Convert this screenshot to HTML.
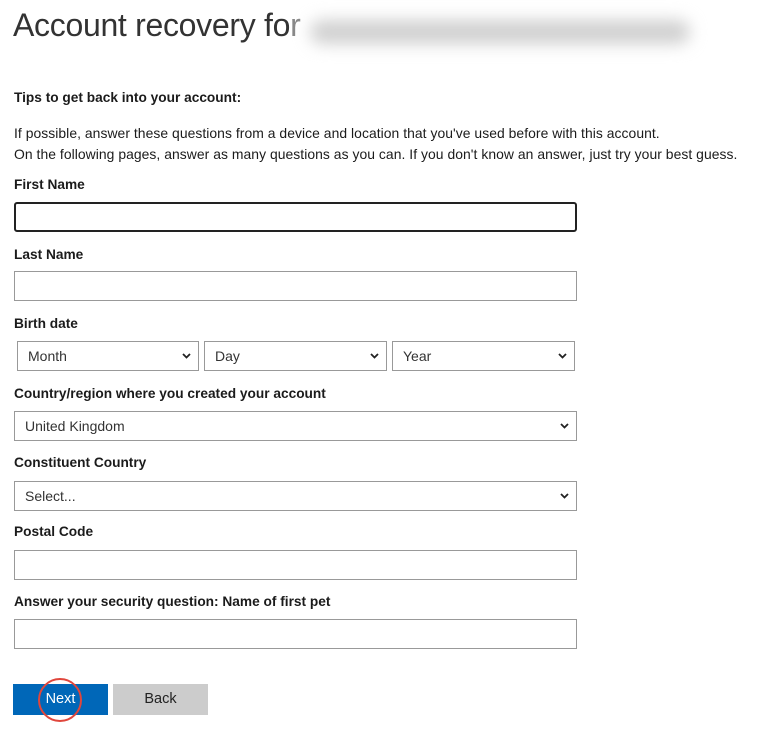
<!DOCTYPE html>
<html><head><style>
body{margin:0;width:768px;height:732px;background:#fff;font-family:"Liberation Sans",sans-serif;color:#1b1b1b;position:relative;overflow:hidden}
.a{position:absolute}
.t{font-size:32px;font-weight:300;color:#333;left:13px;top:7px;letter-spacing:-0.3px}
.blob{left:310px;top:20px;width:380px;height:24px;background:#d0d0d0;filter:blur(8px);border-radius:12px}
.l{font-size:13.7px;font-weight:bold;left:14px}
.p{font-size:13.9px;left:14px;line-height:21px;letter-spacing:0.05px}
.in{border:1px solid #999;background:#fff;box-sizing:border-box;height:30px}
.sel{font-size:14px;padding-left:10px;line-height:28px;color:#333}
.sel svg{position:absolute;right:7px;top:11px}
.btn{top:684px;height:31px;width:95px;font-size:14.5px;text-align:center;line-height:31px}
</style></head><body>
<div class="a t">Account recovery fo<span style="color:#888">r</span></div>
<div class="a blob"></div>
<div class="a l" style="top:90px">Tips to get back into your account:</div>
<div class="a p" style="top:123px">If possible, answer these questions from a device and location that you've used before with this account.<br>On the following pages, answer as many questions as you can. If you don't know an answer, just try your best guess.</div>
<div class="a l" style="top:177px">First Name</div>
<div class="a in" style="left:14px;top:202px;width:563px;border:2px solid #222;border-radius:3px"></div>
<div class="a l" style="top:247px">Last Name</div>
<div class="a in" style="left:14px;top:271px;width:563px"></div>
<div class="a l" style="top:316px">Birth date</div>
<div class="a in sel" style="left:17px;top:341px;width:182px">Month<svg width="9" height="6"><path d="M1 1l3.5 3.5L8 1" stroke="#222" stroke-width="1.8" fill="none"/></svg></div>
<div class="a in sel" style="left:204px;top:341px;width:183px">Day<svg width="9" height="6"><path d="M1 1l3.5 3.5L8 1" stroke="#222" stroke-width="1.8" fill="none"/></svg></div>
<div class="a in sel" style="left:392px;top:341px;width:183px">Year<svg width="9" height="6"><path d="M1 1l3.5 3.5L8 1" stroke="#222" stroke-width="1.8" fill="none"/></svg></div>
<div class="a l" style="top:386px">Country/region where you created your account</div>
<div class="a in sel" style="left:14px;top:411px;width:563px">United Kingdom<svg width="9" height="6"><path d="M1 1l3.5 3.5L8 1" stroke="#222" stroke-width="1.8" fill="none"/></svg></div>
<div class="a l" style="top:455px">Constituent Country</div>
<div class="a in sel" style="left:14px;top:481px;width:563px">Select...<svg width="9" height="6"><path d="M1 1l3.5 3.5L8 1" stroke="#222" stroke-width="1.8" fill="none"/></svg></div>
<div class="a l" style="top:524px">Postal Code</div>
<div class="a in" style="left:14px;top:550px;width:563px"></div>
<div class="a l" style="top:594px">Answer your security question: Name of first pet</div>
<div class="a in" style="left:14px;top:619px;width:563px"></div>
<div class="a btn" style="left:13px;background:#0067b8;color:#fff">Next</div>
<div class="a btn" style="left:113px;background:#ccc;color:#222">Back</div>
<div class="a" style="left:38px;top:678px;width:40px;height:40px;border:2px solid #e0463c;border-radius:50%"></div>
</body></html>
